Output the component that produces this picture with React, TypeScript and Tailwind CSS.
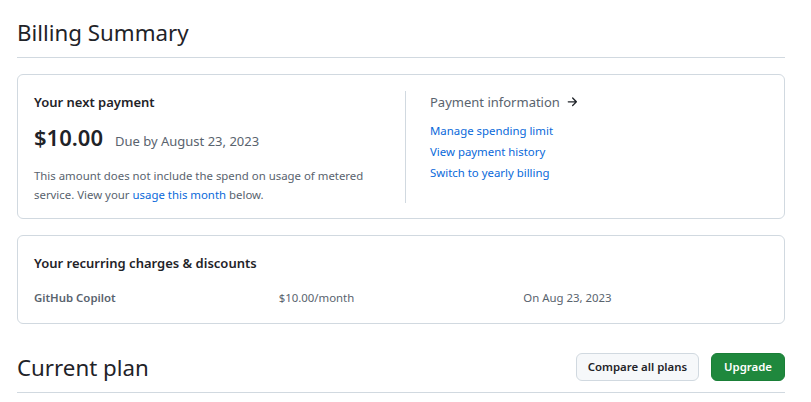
import React from "react";

export default function App() {
  return (
    <div className="bg-white w-[811px] h-[402px] overflow-hidden pt-[16px] text-[#1f2328]" style={{ fontFamily: '"Noto Sans", "Segoe UI", sans-serif' }}>
      <div className="ml-[17px] w-[768px]">
        <div className="border-b border-[#d1d9e0] pb-[7px] mb-[16px]">
          <h2 className="text-[22.3px] leading-[34px] font-normal">Billing Summary</h2>
        </div>

        <div className="border border-[#d1d9e0] rounded-[6px] p-[16px] h-[145px]">
          <div className="flex">
            <div className="w-[371px] pr-[16px]">
              <div className="text-[13px] font-semibold leading-[20px] mt-[1px]">Your next payment</div>
              <div className="flex items-baseline mt-[10px]">
                <span className="text-[22px] font-semibold leading-[30px]">$10.00</span>
                <span className="ml-[12px] text-[13px] text-[#59636e]">Due by August 23, 2023</span>
              </div>
              <p className="text-[11.4px] leading-[19px] text-[#59636e] mt-[14px]">
                This amount does not include the spend on usage of metered service. View your{" "}
                <a className="text-[#0969da]">usage this month</a> below.
              </p>
            </div>
            <div className="border-l border-[#d1d9e0] pl-[24px] h-[112px]">
              <div className="flex items-center text-[13px] text-[#59636e] leading-[20px] mt-[1px]">
                Payment information
                <svg width="14" height="14" viewBox="0 0 16 16" className="ml-[5px]" fill="#1f2328">
                  <path d="M8.22 2.97a.75.75 0 0 1 1.06 0l4.25 4.25a.75.75 0 0 1 0 1.06l-4.25 4.25a.75.75 0 0 1-1.06-1.06l2.97-2.97H3.75a.75.75 0 0 1 0-1.5h7.44L8.22 4.03a.75.75 0 0 1 0-1.06Z" />
                </svg>
              </div>
              <div className="flex flex-col text-[11.4px] text-[#0969da] leading-[21px] mt-[8px]">
                <a>Manage spending limit</a>
                <a>View payment history</a>
                <a>Switch to yearly billing</a>
              </div>
            </div>
          </div>
        </div>

        <div className="border border-[#d1d9e0] rounded-[6px] p-[16px] mt-[16px] h-[89px]">
          <div className="text-[13px] font-semibold leading-[20px] mt-[1px]">Your recurring charges &amp; discounts</div>
          <div className="grid grid-cols-3 text-[11.4px] leading-[18px] mt-[16px]">
            <div className="font-semibold text-[#59636e]">GitHub Copilot</div>
            <div className="text-[#59636e]">$10.00/month</div>
            <div className="text-[#59636e]">On Aug 23, 2023</div>
          </div>
        </div>

        <div className="flex items-center justify-between border-b border-[#d1d9e0] mt-[27px] pb-[7px]">
          <h2 className="text-[22.3px] leading-[34px] font-normal">Current plan</h2>
          <div className="flex gap-[12px] mb-[3px]">
            <button className="h-[28px] px-[11px] rounded-[6px] border border-[#d1d9e0] bg-[#f6f8fa] text-[11.4px] font-semibold text-[#1f2328]">Compare all plans</button>
            <button className="h-[28px] px-[12px] rounded-[6px] border border-[#1a7f37] bg-[#1f883d] text-[11.4px] font-semibold text-white">Upgrade</button>
          </div>
        </div>
      </div>
    </div>
  );
}
